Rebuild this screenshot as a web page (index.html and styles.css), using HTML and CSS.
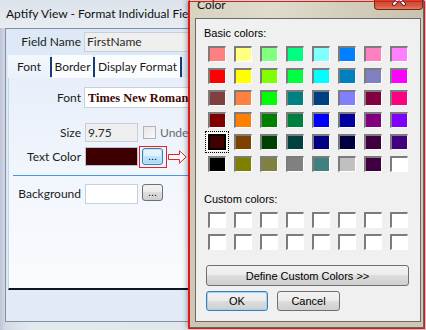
FILE: index.html
```html
<!DOCTYPE html>
<html lang="en">
<head>
    <meta charset="UTF-8">
    <title>Format Individual Field - Color</title>
    <link rel="stylesheet" href="styles.css">
</head>
<body>

<div class="win-main">
    <div class="win-title">Aptify View - Format Individual Field Properties</div>
    <div class="win-client">
        <div class="field-row">
            <span class="lbl lbl-field">Field Name</span>
            <span class="box box-gray box-wide">FirstName</span>
        </div>
        <div class="tabs">
            <span class="tab tab-font tab-on">Font</span><span class="tab-sep"></span>
            <span class="tab tab-border">Border</span><span class="tab-sep"></span>
            <span class="tab tab-format">Display Format</span><span class="tab-sep"></span>
        </div>
        <div class="tab-panel">
            <div class="row row-font">
                <span class="lbl">Font</span>
                <span class="box box-font">Times New Roman</span>
            </div>
            <div class="row row-size">
                <span class="lbl">Size</span>
                <span class="box box-gray box-sm">9.75</span>
                <span class="check"></span>
                <span class="check-lbl">Underline</span>
            </div>
            <div class="row row-color">
                <span class="lbl">Text Color</span>
                <span class="box box-sm box-maroon"></span>
                <span class="callout-btn"><button class="dots dots-focus">...</button></span>
                <svg class="arrow" width="19" height="14" viewBox="0 0 19 14">
                    <polygon points="0.5,4.5 11.5,4.5 11.5,0.8 18.2,7 11.5,13.2 11.5,9.5 0.5,9.5" fill="#fff" stroke="#e0222a" stroke-width="1"/>
                </svg>
            </div>
            <div class="rule"></div>
            <div class="row row-bg">
                <span class="lbl">Background</span>
                <span class="box box-sm"></span>
                <button class="dots">...</button>
            </div>
        </div>
        <div class="win-foot"></div>
    </div>
</div>

<div class="dlg">
    <div class="dlg-title">
        <span class="dlg-caption">Color</span>
        <span class="dlg-close">
            <svg width="49" height="10" viewBox="0 0 49 10">
                <path d="M20 -7 L30 4 M30 -7 L20 4" stroke="#3b2f45" stroke-width="4" stroke-linecap="round"/>
                <path d="M20 -7 L30 4 M30 -7 L20 4" stroke="#fff" stroke-width="2" stroke-linecap="round"/>
            </svg>
        </span>
    </div>
    <div class="dlg-client">
        <div class="dlg-label">Basic colors:</div>
        <div class="swatches">
            <span class="sw" style="background:#ff8080"></span>
            <span class="sw" style="background:#ffff80"></span>
            <span class="sw" style="background:#80ff80"></span>
            <span class="sw" style="background:#00ff80"></span>
            <span class="sw" style="background:#80ffff"></span>
            <span class="sw" style="background:#0080ff"></span>
            <span class="sw" style="background:#ff80c0"></span>
            <span class="sw" style="background:#ff80ff"></span>

            <span class="sw" style="background:#ff0000"></span>
            <span class="sw" style="background:#ffff00"></span>
            <span class="sw" style="background:#80ff00"></span>
            <span class="sw" style="background:#00ff40"></span>
            <span class="sw" style="background:#00ffff"></span>
            <span class="sw" style="background:#0080c0"></span>
            <span class="sw" style="background:#8080c0"></span>
            <span class="sw" style="background:#ff00ff"></span>

            <span class="sw" style="background:#804040"></span>
            <span class="sw" style="background:#ff8040"></span>
            <span class="sw" style="background:#00ff00"></span>
            <span class="sw" style="background:#008080"></span>
            <span class="sw" style="background:#004080"></span>
            <span class="sw" style="background:#8080ff"></span>
            <span class="sw" style="background:#800040"></span>
            <span class="sw" style="background:#ff0080"></span>

            <span class="sw" style="background:#800000"></span>
            <span class="sw" style="background:#ff8000"></span>
            <span class="sw" style="background:#008000"></span>
            <span class="sw" style="background:#008040"></span>
            <span class="sw" style="background:#0000ff"></span>
            <span class="sw" style="background:#0000a0"></span>
            <span class="sw" style="background:#800080"></span>
            <span class="sw" style="background:#8000ff"></span>

            <span class="sw sw-sel" style="background:#400000"></span>
            <span class="sw" style="background:#804000"></span>
            <span class="sw" style="background:#004000"></span>
            <span class="sw" style="background:#004040"></span>
            <span class="sw" style="background:#000080"></span>
            <span class="sw" style="background:#000040"></span>
            <span class="sw" style="background:#400040"></span>
            <span class="sw" style="background:#400080"></span>

            <span class="sw" style="background:#000000"></span>
            <span class="sw" style="background:#808000"></span>
            <span class="sw" style="background:#808040"></span>
            <span class="sw" style="background:#808080"></span>
            <span class="sw" style="background:#408080"></span>
            <span class="sw" style="background:#c0c0c0"></span>
            <span class="sw" style="background:#400040"></span>
            <span class="sw" style="background:#ffffff"></span>
        </div>
        <div class="dlg-label custom-label">Custom colors:</div>
        <div class="swatches custom">
            <span class="sw"></span><span class="sw"></span><span class="sw"></span><span class="sw"></span>
            <span class="sw"></span><span class="sw"></span><span class="sw"></span><span class="sw"></span>
            <span class="sw"></span><span class="sw"></span><span class="sw"></span><span class="sw"></span>
            <span class="sw"></span><span class="sw"></span><span class="sw"></span><span class="sw"></span>
        </div>
        <button class="btn btn-define">Define Custom Colors &gt;&gt;</button>
        <div class="btn-row">
            <button class="btn btn-ok">OK</button>
            <button class="btn btn-cancel">Cancel</button>
        </div>
    </div>
</div>

<div class="callout-dlg"></div>

</body>
</html>
```

FILE: styles.css
```css
* {
    box-sizing: border-box;
}
html, body {
    margin: 0;
    padding: 0;
}
body {
    width: 426px;
    height: 330px;
    overflow: hidden;
    position: relative;
    background: #c9cfd8;
    font-family: Lato, "Liberation Sans", sans-serif;
    font-size: 12px;
    color: #1b1b1b;
}

/* main window (behind the dialog) */
.win-main {
    position: absolute;
    left: 0;
    top: 0;
    width: 240px;
    height: 330px;
    background: linear-gradient(to right, #bfc4d8 0, #d3d8e4 5px, #e4e9ef 30px, #e1e6ec 100%);
}
.win-title {
    height: 28px;
    line-height: 27px;
    padding-left: 6px;
    white-space: nowrap;
    color: #111;
    background: linear-gradient(to bottom, #dbe2ea, #e8edf2);
}
.win-client {
    margin-left: 5px;
    height: 294px;
    border: 1px solid #8390a3;
    background: #dee9f7;
    display: flex;
    flex-direction: column;
}
.field-row {
    display: flex;
    margin-top: 3px;
    height: 20px;
}
.lbl {
    width: 72px;
    text-align: right;
    white-space: nowrap;
    flex-shrink: 0;
}
.lbl-field {
    width: 75px;
    line-height: 20px;
    margin-right: 3px;
}
.box {
    display: block;
    flex-shrink: 0;
    border: 1px solid #c6d0dc;
    background: #fff;
    padding-left: 2px;
    white-space: nowrap;
    overflow: hidden;
}
.box-gray {
    background: #efefef;
    color: #2a2a2a;
}
.box-wide {
    width: 150px;
    line-height: 18px;
}
.box-sm {
    width: 53px;
}

/* tabs */
.tabs {
    display: flex;
    margin-top: 3px;
    height: 23px;
    padding-left: 2px;
}
.tab {
    display: flex;
    align-items: center;
    justify-content: center;
    background: #fbfcfe;
    white-space: nowrap;
}
.tab-on {
    background: linear-gradient(to bottom, #f3f7fd, #eaf1fb);
}
.tab-font { width: 42px; }
.tab-border { width: 41px; }
.tab-format { width: 85px; }
.tab-sep {
    width: 2px;
    height: 20px;
    margin-top: 2px;
    background: #193a78;
}

.tab-panel {
    margin-left: 2px;
    height: 212px;
    border-left: 1px solid #c7d4e6;
    border-bottom: 2px solid #0e1626;
    background: linear-gradient(to bottom, #e8effa, #f4f7fd 60%, #fafbfe);
}
.row {
    display: flex;
    align-items: flex-start;
}
.row .lbl {
    margin-right: 4px;
}
.row-font {
    margin-top: 9px;
    height: 21px;
}
.row-font .lbl {
    line-height: 21px;
}
.box-font {
    width: 130px;
    height: 21px;
    margin-left: -1px;
    padding-left: 3px;
    font-family: "Liberation Serif", serif;
    font-weight: bold;
    font-size: 12.4px;
    line-height: 20px;
    color: #3e0808;
}
.row-size {
    margin-top: 15px;
    height: 19px;
}
.row-size .lbl {
    line-height: 19px;
}
.row-size .box {
    height: 19px;
    line-height: 17px;
}
.check {
    width: 13px;
    height: 13px;
    margin: 3px 0 0 5px;
    border: 1px solid #b4b4b4;
    background: linear-gradient(135deg, #e6e6e6, #fafafa);
}
.check-lbl {
    margin-left: 4px;
    line-height: 19px;
    color: #6a6a6a;
    white-space: nowrap;
}
.row-color {
    margin-top: 4px;
    height: 22px;
}
.row-color .lbl {
    line-height: 22px;
}
.box-maroon {
    height: 19px;
    margin-top: 1px;
    background: #3d0000;
    border-color: #b9c3cf;
}
.callout-btn {
    display: flex;
    margin-left: 1px;
    width: 28px;
    height: 22px;
    padding: 1px 0 0 2px;
    border: 1px solid #e0222a;
}
.arrow {
    margin: 4px 0 0 1px;
}
.rule {
    margin: 7px 0 0 4px;
    height: 1px;
    background: #4a94e6;
}
.row-bg {
    margin-top: 8px;
    height: 20px;
}
.row-bg .lbl {
    line-height: 20px;
}
.row-bg .box {
    height: 20px;
}
.row-bg .dots {
    margin-left: 4px;
}
.dots {
    width: 21px;
    height: 17px;
    padding: 0;
    border: 1px solid #707070;
    border-radius: 3px;
    background: linear-gradient(to bottom, #f2f2f2, #ebebeb 50%, #dddddd 50%, #cfcfcf);
    font-family: "Liberation Sans", sans-serif;
    font-size: 11px;
    line-height: 13px;
    color: #000;
}
.dots-focus {
    border-color: #3c7fb1;
    background: linear-gradient(to bottom, #eaf6fd, #d9f0fc 50%, #bee6fd 50%, #a7d9f5);
    box-shadow: inset 0 0 0 1px #c4e5f6;
}
.win-foot {
    flex: 1;
    background: #e1ebf8;
}

/* color dialog */
.dlg {
    position: absolute;
    left: 189px;
    top: 0;
    width: 235px;
    height: 328px;
    border: 1px solid #6d6657;
    border-top: none;
    background: linear-gradient(to bottom, #dad4c3, #d4cdb9 40px, #cfc7b2);
    box-shadow: -2px 0 5px rgba(0, 0, 0, 0.35);
    display: flex;
    flex-direction: column;
}
.dlg-title {
    display: flex;
    height: 18px;
    background: linear-gradient(to right, #d8d2c1, #e0dbcd 35%, #d2ccba 70%, #c9c2ae);
}
.dlg-caption {
    flex: 1;
    padding-left: 7px;
    margin-top: -2px;
    line-height: 13px;
    font-family: Lato, "Liberation Sans", sans-serif;
    font-size: 12px;
    color: #111;
}
.dlg-close {
    width: 49px;
    height: 10px;
    border: 1px solid #6b2a20;
    border-top: none;
    border-radius: 0 0 4px 4px;
    background: linear-gradient(to bottom, #c24a34, #d9553b 60%, #e77a5b);
    overflow: hidden;
}
.dlg-close svg {
    display: block;
    margin-left: -1px;
}
.dlg-client {
    margin-left: 5px;
    width: 226px;
    height: 304px;
    border: 1px solid #6a6a6a;
    background: #f0f0f0;
    font-family: "Liberation Sans", sans-serif;
    font-size: 11px;
    color: #000;
}
.dlg-label {
    margin: 8px 0 0 8px;
    line-height: 13px;
}
.custom-label {
    margin-top: 21px;
}
.swatches {
    display: grid;
    grid-template-columns: repeat(8, 18px);
    grid-auto-rows: 16px;
    column-gap: 8px;
    row-gap: 6px;
    margin: 6px 0 0 12px;
}
.sw {
    display: block;
    border-style: solid;
    border-width: 2px 1px 1px 2px;
    border-color: #7c7c7c #ffffff #ffffff #7c7c7c;
    background: #fff;
}
.sw-sel {
    border: 2px solid #000;
    box-shadow: 0 0 0 1px #fff;
    outline: 1px dotted #000;
    outline-offset: 2px;
}
.btn {
    display: block;
    height: 20px;
    padding: 0;
    border: 1px solid #707070;
    border-radius: 3px;
    background: linear-gradient(to bottom, #f2f2f2, #ebebeb 50%, #dddddd 50%, #cfcfcf);
    font-family: "Liberation Sans", sans-serif;
    font-size: 11px;
    color: #000;
}
.btn-define {
    margin: 15px 0 0 10px;
    width: 203px;
    height: 21px;
}
.btn-row {
    display: flex;
    margin: 5px 0 0 10px;
}
.btn-ok {
    width: 62px;
    border-color: #3c7fb1;
    box-shadow: inset 0 0 0 1px #9ed4f2;
}
.btn-cancel {
    width: 63px;
    margin-left: 9px;
}

.callout-dlg {
    position: absolute;
    left: 188px;
    top: 1px;
    width: 237px;
    height: 328px;
    border: 1px solid #e4161d;
    border-left-width: 2px;
    pointer-events: none;
}
```
